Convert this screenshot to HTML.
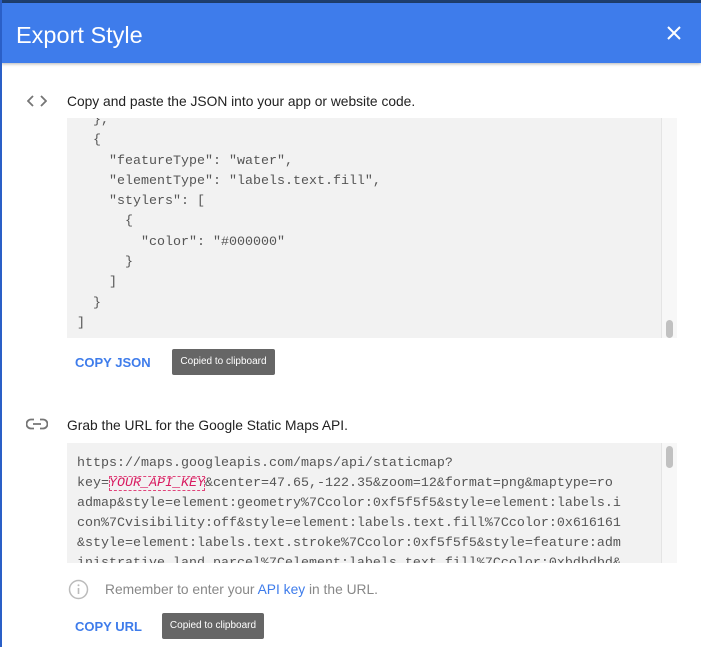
<!DOCTYPE html>
<html><head><style>
*{margin:0;padding:0;box-sizing:border-box}
body{width:701px;height:647px;overflow:hidden;background:#fff;font-family:"Liberation Sans",sans-serif;position:relative}
.top{position:absolute;left:0;top:0;width:701px;height:3px;background:#1f3f6e}
.lb{position:absolute;left:0;top:0;width:2px;height:647px;background:#2a5fc7}
.hdr{position:absolute;left:1px;top:3px;width:700px;height:60px;background:#3e7ceb;box-shadow:0 1px 3px rgba(0,0,0,.3)}
.hdr h1{position:absolute;left:15px;top:19px;font-weight:normal;font-size:23.5px;color:#fff}
.lbl{position:absolute;left:67px;font-size:13.8px;color:#222}
.code{position:absolute;left:67px;width:610px;background:#f2f2f2;overflow:hidden;font-family:"Liberation Mono",monospace;font-size:13.33px;color:#555;line-height:20.3px;white-space:pre;padding-left:10px}
.sb{position:absolute;right:0;top:0;bottom:0;width:16px;background:#f7f7f7;border-left:1px solid #e4e4e4}
.th{position:absolute;left:4px;width:7px;height:18px;border-radius:4px;background:#c1c1c1}
.btn{position:absolute;left:75px;color:#3e7ceb;font-size:13px;font-weight:bold;letter-spacing:0}
.tip{position:absolute;background:#666;color:#fff;font-size:10px;border-radius:2px;text-align:center;line-height:25px;height:26px}
.key{color:#d81b60;font-style:italic;outline:1px dashed #e0457b;outline-offset:-1px}
</style></head><body>
<div class="top"></div>
<div class="hdr"><h1>Export Style</h1>
<svg style="position:absolute;left:666px;top:23px" width="14" height="14"><path d="M1 1L13 13M13 1L1 13" stroke="#fff" stroke-width="2"/></svg></div>
<div class="lb"></div>
<svg style="position:absolute;left:27px;top:95px" width="20" height="12"><path d="M6 1L1 6L6 11M14 1L19 6L14 11" stroke="#757575" stroke-width="1.8" fill="none"/></svg>
<div class="lbl" style="top:94px">Copy and paste the JSON into your app or website code.</div>
<div class="code" style="top:118px;height:220px;padding-top:0;"><div style="margin-top:-7px">  },
  {
    "featureType": "water",
    "elementType": "labels.text.fill",
    "stylers": [
      {
        "color": "#000000"
      }
    ]
  }
]</div><div class="sb"><div class="th" style="top:202px"></div></div></div>
<div class="btn" style="top:355px">COPY JSON</div>
<div class="tip" style="left:172px;top:349px;width:103px">Copied to clipboard</div>
<svg style="position:absolute;left:26px;top:418px" width="22" height="12"><path d="M8 1.5H5a4.5 4.5 0 0 0 0 9H8M14 1.5H17a4.5 4.5 0 0 1 0 9H14M7 6H15" stroke="#757575" stroke-width="1.8" fill="none"/></svg>
<div class="lbl" style="top:418px">Grab the URL for the Google Static Maps API.</div>
<div class="code" style="top:443px;height:120px;padding-top:11px;line-height:20px">https://maps.googleapis.com/maps/api/staticmap?
key=<span class="key">YOUR_API_KEY</span>&amp;center=47.65,-122.35&amp;zoom=12&amp;format=png&amp;maptype=ro
admap&amp;style=element:geometry%7Ccolor:0xf5f5f5&amp;style=element:labels.i
con%7Cvisibility:off&amp;style=element:labels.text.fill%7Ccolor:0x616161
&amp;style=element:labels.text.stroke%7Ccolor:0xf5f5f5&amp;style=feature:adm
inistrative.land_parcel%7Celement:labels.text.fill%7Ccolor:0xbdbdbd&amp;<div class="sb"><div class="th" style="top:3px;height:22px"></div></div></div>
<svg style="position:absolute;left:68px;top:579px" width="21" height="21"><circle cx="10.5" cy="10.5" r="9" stroke="#bbb" stroke-width="1.5" fill="none"/><path d="M10.5 9V15" stroke="#bbb" stroke-width="1.6"/><circle cx="10.5" cy="6.3" r="1" fill="#bbb"/></svg>
<div class="lbl" style="left:105px;top:582px;color:#888">Remember to enter your <span style="color:#3e7ceb">API key</span> in the URL.</div>
<div class="btn" style="top:619px">COPY URL</div>
<div class="tip" style="left:162px;top:613px;width:102px">Copied to clipboard</div>
</body></html>
